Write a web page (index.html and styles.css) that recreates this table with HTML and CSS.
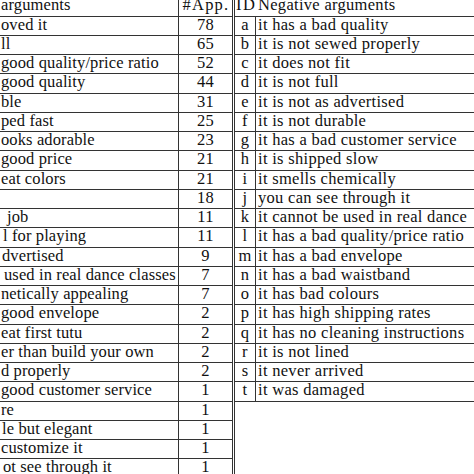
FILE: index.html
```html
<!DOCTYPE html>
<html>
<head>
<meta charset="utf-8">
<link rel="stylesheet" href="styles.css">
</head>
<body>
<div class="page">
  <div class="pos">
    <div class="row head"><div class="txt">arguments</div><div class="num">#App.</div></div>
    <div class="row"><div class="txt">oved it</div><div class="num">78</div></div>
    <div class="row"><div class="txt">ll</div><div class="num">65</div></div>
    <div class="row"><div class="txt">good quality/price ratio</div><div class="num">52</div></div>
    <div class="row"><div class="txt">good quality</div><div class="num">44</div></div>
    <div class="row"><div class="txt">ble</div><div class="num">31</div></div>
    <div class="row"><div class="txt">ped fast</div><div class="num">25</div></div>
    <div class="row"><div class="txt">ooks adorable</div><div class="num">23</div></div>
    <div class="row"><div class="txt">good price</div><div class="num">21</div></div>
    <div class="row"><div class="txt">eat colors</div><div class="num">21</div></div>
    <div class="row"><div class="txt"></div><div class="num">18</div></div>
    <div class="row"><div class="txt in7">job</div><div class="num">11</div></div>
    <div class="row"><div class="txt in3">l for playing</div><div class="num">11</div></div>
    <div class="row"><div class="txt in2">dvertised</div><div class="num">9</div></div>
    <div class="row"><div class="txt in4">used in real dance classes</div><div class="num">7</div></div>
    <div class="row"><div class="txt">netically appealing</div><div class="num">7</div></div>
    <div class="row"><div class="txt">good envelope</div><div class="num">2</div></div>
    <div class="row"><div class="txt">eat first tutu</div><div class="num">2</div></div>
    <div class="row"><div class="txt">er than build your own</div><div class="num">2</div></div>
    <div class="row"><div class="txt">d properly</div><div class="num">2</div></div>
    <div class="row"><div class="txt">good customer service</div><div class="num">1</div></div>
    <div class="row"><div class="txt">re</div><div class="num">1</div></div>
    <div class="row"><div class="txt in2">le but elegant</div><div class="num">1</div></div>
    <div class="row"><div class="txt">customize it</div><div class="num">1</div></div>
    <div class="row"><div class="txt in3">ot see through it</div><div class="num">1</div></div>
  </div>
  <div class="neg">
    <div class="row head"><div class="id">ID</div><div class="arg">Negative arguments</div></div>
    <div class="row"><div class="id">a</div><div class="arg">it has a bad quality</div></div>
    <div class="row"><div class="id">b</div><div class="arg">it is not sewed properly</div></div>
    <div class="row"><div class="id">c</div><div class="arg">it does not fit</div></div>
    <div class="row"><div class="id">d</div><div class="arg">it is not full</div></div>
    <div class="row"><div class="id">e</div><div class="arg">it is not as advertised</div></div>
    <div class="row"><div class="id">f</div><div class="arg">it is not durable</div></div>
    <div class="row"><div class="id">g</div><div class="arg">it has a bad customer service</div></div>
    <div class="row"><div class="id">h</div><div class="arg">it is shipped slow</div></div>
    <div class="row"><div class="id">i</div><div class="arg">it smells chemically</div></div>
    <div class="row"><div class="id">j</div><div class="arg">you can see through it</div></div>
    <div class="row"><div class="id">k</div><div class="arg">it cannot be used in real dance</div></div>
    <div class="row"><div class="id">l</div><div class="arg">it has a bad quality/price ratio</div></div>
    <div class="row"><div class="id">m</div><div class="arg">it has a bad envelope</div></div>
    <div class="row"><div class="id">n</div><div class="arg">it has a bad waistband</div></div>
    <div class="row"><div class="id">o</div><div class="arg">it has bad colours</div></div>
    <div class="row"><div class="id">p</div><div class="arg">it has high shipping rates</div></div>
    <div class="row"><div class="id">q</div><div class="arg">it has no cleaning instructions</div></div>
    <div class="row"><div class="id">r</div><div class="arg">it is not lined</div></div>
    <div class="row"><div class="id">s</div><div class="arg">it never arrived</div></div>
    <div class="row"><div class="id">t</div><div class="arg">it was damaged</div></div>
  </div>
</div>
</body>
</html>
```
FILE: styles.css
```css
html, body {
  margin: 0;
  padding: 0;
  background: #fff;
  overflow: hidden;
}
body {
  width: 474px;
  height: 474px;
  font-family: "Liberation Serif", "Times New Roman", serif;
  font-size: 16.5px;
  color: #111;
}
.page {
  display: flex;
  gap: 1px;
  margin-top: -2.75px;
  height: 480px;
}
.row {
  display: grid;
  height: 19.25px;
  box-sizing: border-box;
  border-bottom: 1px solid #333;
  line-height: 16px;
  white-space: nowrap;
}
.pos {
  width: 233px;
  flex: none;
  letter-spacing: 0.12px;
}
.pos .row {
  grid-template-columns: 179px 54px;
}
.txt {
  box-sizing: border-box;
  border-right: 1px solid #333;
  padding-left: 1px;
}
.num {
  box-sizing: border-box;
  border-right: 1px solid #333;
  text-align: center;
  letter-spacing: 0.3px;
}
.head .num {
  letter-spacing: 1.2px;
  padding-left: 1px;
}
.in2 { padding-left: 2px; }
.in3 { padding-left: 3px; }
.in4 { padding-left: 4px; }
.in7 { padding-left: 7px; }
.neg {
  flex: 1;
  border-left: 1px solid #333;
  letter-spacing: 0.3px;
}
.neg .row {
  grid-template-columns: 21px 1fr;
}
.id {
  box-sizing: border-box;
  border-right: 1px solid #333;
  text-align: center;
}
.neg .head .id {
  border-right: none;
  padding-left: 1px;
  letter-spacing: 1.5px;
}
.arg {
  padding-left: 2px;
}
.neg .head .arg {
  padding-left: 2px;
}
```
